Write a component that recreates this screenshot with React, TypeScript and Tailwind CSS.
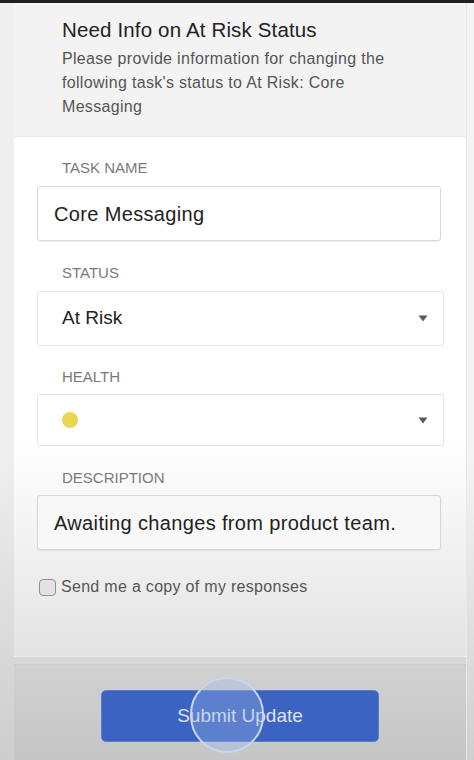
import React from 'react';

const Caret: React.FC = () => (
    <svg width="10" height="7" viewBox="0 0 10 7" className="shrink-0">
        <path d="M0.5 0.5 H9.5 L5 6.5 Z" fill="#5a5a5a" />
    </svg>
);

const Label: React.FC<{ children: React.ReactNode }> = ({ children }) => (
    <div className="ml-[25px] h-[20px] text-[15px] leading-[20px] uppercase text-[#7a7a7a]">{children}</div>
);

const App: React.FC = () => {
    return (
        <div className="w-[474px] h-[760px] overflow-hidden relative flex flex-col bg-[#ececec] font-['Liberation_Sans',Arial,sans-serif]">
            <div className="h-[3px] bg-[#1f1f1f] shrink-0" />

            <div className="flex flex-1">
                {/* left edge of the sheet */}
                <div className="w-[14px] shrink-0 bg-gradient-to-b from-[#efefef] from-[60%] to-[#cdcdcd]" />

                <div className="flex-1 flex flex-col">
                    {/* header */}
                    <div className="bg-[#f3f3f3] h-[134px] pl-[48px] pt-[13px] border-b border-[#e6e6e6]">
                        <h1 className="text-[20.5px] leading-[28px] tracking-[0.15px] text-[#222]">Need Info on At Risk Status</h1>
                        <p className="mt-[3px] text-[16px] leading-[24px] tracking-[0.32px] text-[#555] w-[360px]">
                            Please provide information for changing the following task's status to At Risk: Core Messaging
                        </p>
                    </div>

                    {/* form card */}
                    <div className="h-[520px] bg-gradient-to-b from-white from-[58%] to-[#e4e4e4] pt-[21px] pl-[23px] border-b border-[#ececec]">
                        <Label>Task name</Label>
                        <div className="mt-[8px] w-[404px] h-[55px] rounded-[3px] border border-[#d9d9d9] bg-white shadow-[0_1px_2px_rgba(0,0,0,0.06)] flex items-center pl-[16px] text-[20px] tracking-[0.35px] text-[#222]">
                            Core Messaging
                        </div>

                        <div className="mt-[22px]">
                            <Label>Status</Label>
                        </div>
                        <div className="mt-[8px] w-[407px] h-[55px] rounded-[2px] border border-[#e6e6e6] bg-white flex items-center justify-between pl-[24px] pr-[15px] text-[19px] text-[#222]">
                            <span>At Risk</span>
                            <Caret />
                        </div>

                        <div className="mt-[21px]">
                            <Label>Health</Label>
                        </div>
                        <div className="mt-[7px] w-[407px] h-[52px] rounded-[2px] border border-[#e6e6e6] bg-white flex items-center justify-between pl-[24px] pr-[15px]">
                            <span className="w-[16px] h-[16px] rounded-full bg-[#ead552]" />
                            <Caret />
                        </div>

                        <div className="mt-[22px]">
                            <Label>Description</Label>
                        </div>
                        <div className="mt-[7px] w-[404px] h-[55px] rounded-[3px] border border-[#d6d6d6] bg-[#f8f8f8] shadow-[0_1px_2px_rgba(0,0,0,0.06)] flex items-center pl-[16px] text-[20px] tracking-[0.35px] text-[#222]">
                            Awaiting changes from product team.
                        </div>

                        <label className="mt-[27px] flex items-center h-[20px] ml-[2px]">
                            <span className="w-[17px] h-[17px] rounded-[4px] border border-[#8f8f8f] bg-[#e2e2e2]" />
                            <span className="ml-[5px] text-[16px] tracking-[0.3px] text-[#555]">Send me a copy of my responses</span>
                        </label>
                    </div>

                    <div className="h-[8px] bg-[#d9d9d9] border-b border-[#c9c9c9]" />

                    {/* footer */}
                    <div className="flex-1 bg-gradient-to-b from-[#d1d1d1] to-[#c6c6c6] flex justify-center pt-[25px]">
                        <button className="relative w-[278px] h-[52px] rounded-[5px] bg-[#3b63c2] border border-[#5a7fd0] text-[19px] text-[#dde4f5]">
                            Submit Update
                            {/* touch indicator */}
                            <span className="absolute left-[88px] top-[-14px] w-[74px] h-[76px] rounded-full border-2 border-[#c9d6f0] bg-[#9fb6e6]/35" />
                        </button>
                    </div>
                </div>

                {/* right edge */}
                <div className="w-[8px] shrink-0 bg-gradient-to-b from-[#f4f4f4] from-[60%] to-[#cfcfcf] border-l border-[#e8e8e8]" />
            </div>
        </div>
    );
};

export default App;
